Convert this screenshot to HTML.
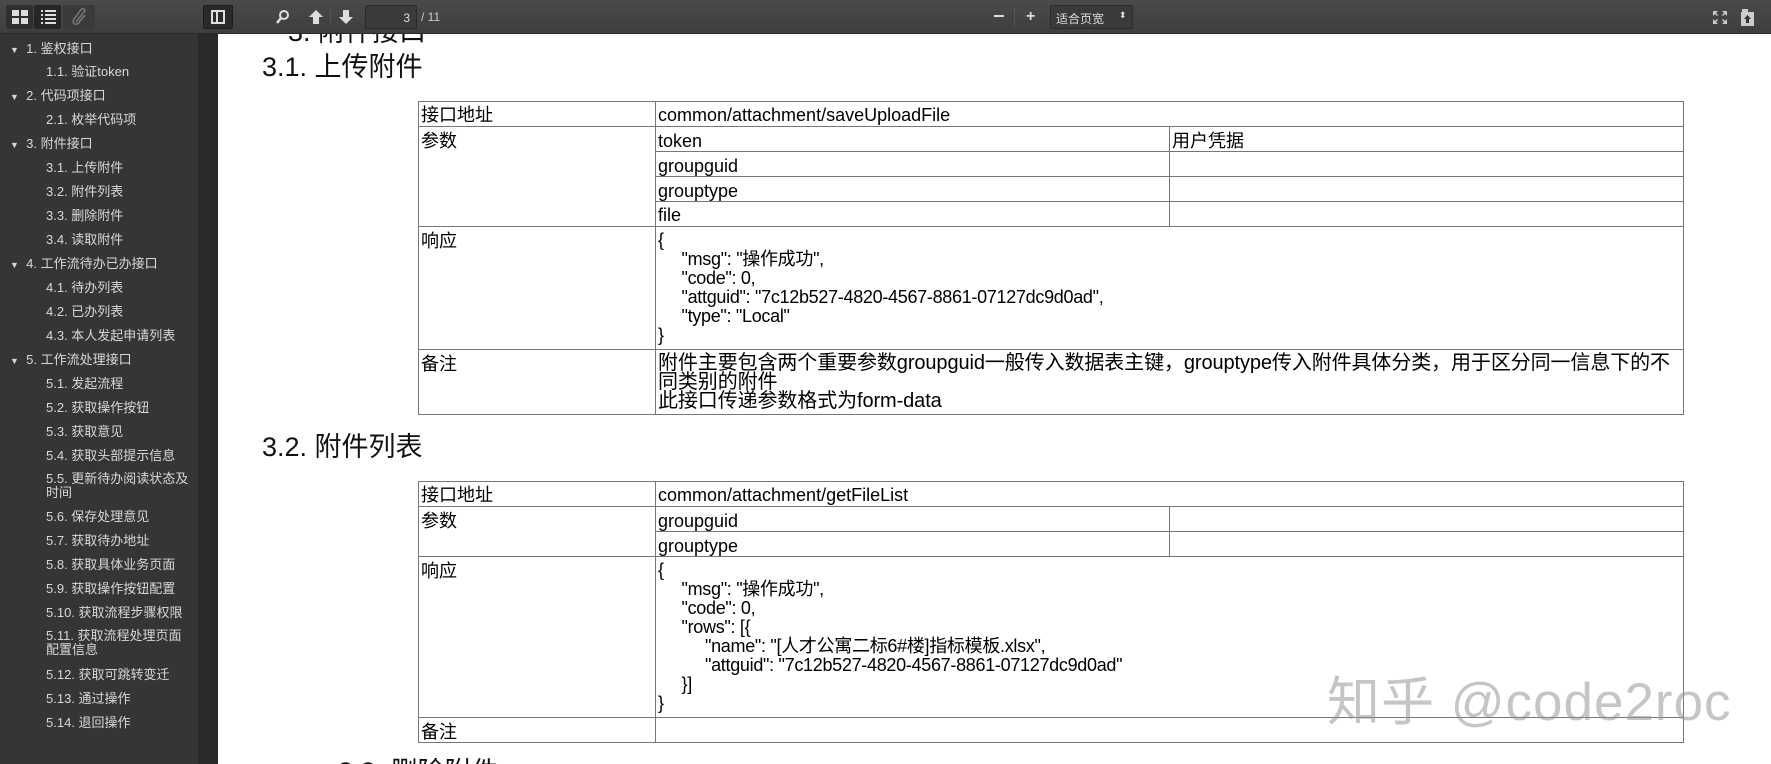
<!DOCTYPE html>
<html style="width:1771px;height:764px;overflow:hidden"><head><meta charset="utf-8"><style>
*{margin:0;padding:0;box-sizing:border-box}
body{width:1771px;height:764px;overflow:hidden;background:#fff;font-family:"Liberation Sans","Noto Sans CJK SC",sans-serif;position:relative}
.a{position:absolute;white-space:nowrap}
#tb{left:0;top:0;width:1771px;height:34px;background:linear-gradient(#4a4a4a,#3e3e3e);border-bottom:1px solid #2a2a2a;z-index:5}
#tbx{position:absolute;left:0;top:0;width:1771px;height:34px;z-index:6}
#tbx>*{position:absolute}
#sb{left:0;top:34px;width:198px;height:730px;background:#353535}
#band{left:198px;top:34px;width:20px;height:730px;background:#2a2a2a}
.s{position:absolute;color:#d8d8d8;font-size:13px;line-height:14px;white-space:nowrap}
.btn{border-radius:2px}
.t{font-size:18px;color:#000;line-height:20px}
.ln{position:absolute;background:#777}
.h{font-size:27px;color:#111}
.code{font-size:18px;line-height:19px;position:absolute;white-space:pre;letter-spacing:-0.3px}
</style></head><body>
<div class="a" style="left:288px;top:10px;font-size:27px;color:#111">3. 附件接口</div>
<div id="tb" class="a"></div>
<div id="tbx">
<div class="btn" style="left:6px;top:5px;width:27px;height:24px;background:#2f2f2f"></div>
<svg style="left:12px;top:10px" width="16" height="14"><rect x="0" y="0" width="7" height="6" fill="#ddd"/><rect x="9" y="0" width="7" height="6" fill="#ddd"/><rect x="0" y="8" width="7" height="6" fill="#ddd"/><rect x="9" y="8" width="7" height="6" fill="#ddd"/></svg>
<div class="btn" style="left:34px;top:5px;width:27px;height:24px;background:#262626"></div>
<svg style="left:41px;top:10px" width="15" height="14"><g fill="#ddd"><rect x="0" y="0" width="2" height="2"/><rect x="4" y="0" width="11" height="2"/><rect x="0" y="4" width="2" height="2"/><rect x="4" y="4" width="11" height="2"/><rect x="0" y="8" width="2" height="2"/><rect x="4" y="8" width="11" height="2"/><rect x="0" y="12" width="2" height="2"/><rect x="4" y="12" width="11" height="2"/></g></svg>
<div class="btn" style="left:63px;top:5px;width:32px;height:24px;background:#3a3a3a"></div>
<svg style="left:72px;top:8px" width="16" height="18"><path d="M4 14 L12 4 Q14 2 12 1 Q10 0 8 3 L2 11 Q0 15 3 16 Q6 17 8 13 L13 7" stroke="#777" stroke-width="1.5" fill="none"/></svg>
<div class="btn" style="left:203px;top:5px;width:30px;height:24px;background:#2a2a2a;border:1px solid #1e1e1e"></div>
<svg style="left:211px;top:10px" width="14" height="14"><rect x="1" y="1" width="12" height="12" fill="none" stroke="#ddd" stroke-width="2"/><rect x="5" y="1" width="2" height="12" fill="#ddd"/></svg>
<svg style="left:276px;top:9px" width="14" height="16"><circle cx="8" cy="6" r="4" stroke="#ddd" stroke-width="2" fill="none"/><path d="M5 9 L1 14" stroke="#ddd" stroke-width="2.5"/></svg>
<svg style="left:308px;top:9px" width="16" height="16"><path d="M8 1 L15 8 L11 8 L11 15 L5 15 L5 8 L1 8Z" fill="#ddd"/></svg>
<div style="left:330px;top:8px;width:1px;height:18px;background:#555"></div>
<svg style="left:338px;top:9px" width="16" height="16"><path d="M8 15 L15 8 L11 8 L11 1 L5 1 L5 8 L1 8Z" fill="#ddd"/></svg>
<div style="left:365px;top:5px;width:52px;height:24px;background:#3a3a3a;border:1px solid #2a2a2a;border-radius:2px;color:#ddd;font-size:12px;text-align:right;padding:5px 6px 0 0">3</div>
<div style="left:421px;top:10px;color:#ccc;font-size:12px">/ 11</div>
<div style="left:994px;top:15px;width:10px;height:2px;background:#ddd"></div>
<div style="left:1014px;top:8px;width:1px;height:18px;background:#555"></div>
<div style="left:1026px;top:10px;color:#ddd;font-size:16px;font-weight:bold;line-height:14px">+</div>
<div style="left:1050px;top:5px;width:83px;height:24px;background:#3a3a3a;border:1px solid #2c2c2c;border-radius:2px;color:#ddd;font-size:12px;padding:4px 0 0 5px">适合页宽<span style="position:absolute;left:68px;top:4px;font-size:9px">⬍</span></div>
<svg style="left:1713px;top:11px" width="14" height="13"><g fill="#ccc"><path d="M0 0h5l-2 2 2 2-1 1-2-2-2 2z"/><path d="M14 0h-5l2 2-2 2 1 1 2-2 2 2z"/><path d="M0 13h5l-2-2 2-2-1-1-2 2-2-2z"/><path d="M14 13h-5l2-2-2-2 1-1 2 2 2-2z"/></g></svg>
<svg style="left:1741px;top:9px" width="13" height="17"><rect x="0" y="3" width="13" height="14" fill="#ccc"/><rect x="1" y="0" width="6" height="3" fill="#ccc"/><path d="M6.5 6 L10 10 L8 10 L8 14 L5 14 L5 10 L3 10Z" fill="#333"/></svg>
</div>

<div id="sb" class="a"></div>
<div id="band" class="a"></div>
<div class="s" style="left:10px;top:42px"><span style="font-size:9px">▼</span>&nbsp; 1. 鉴权接口</div>
<div class="s" style="left:46px;top:65px">1.1. 验证token</div>
<div class="s" style="left:10px;top:89px"><span style="font-size:9px">▼</span>&nbsp; 2. 代码项接口</div>
<div class="s" style="left:46px;top:113px">2.1. 枚举代码项</div>
<div class="s" style="left:10px;top:137px"><span style="font-size:9px">▼</span>&nbsp; 3. 附件接口</div>
<div class="s" style="left:46px;top:161px">3.1. 上传附件</div>
<div class="s" style="left:46px;top:185px">3.2. 附件列表</div>
<div class="s" style="left:46px;top:209px">3.3. 删除附件</div>
<div class="s" style="left:46px;top:233px">3.4. 读取附件</div>
<div class="s" style="left:10px;top:257px"><span style="font-size:9px">▼</span>&nbsp; 4. 工作流待办已办接口</div>
<div class="s" style="left:46px;top:281px">4.1. 待办列表</div>
<div class="s" style="left:46px;top:305px">4.2. 已办列表</div>
<div class="s" style="left:46px;top:329px">4.3. 本人发起申请列表</div>
<div class="s" style="left:10px;top:353px"><span style="font-size:9px">▼</span>&nbsp; 5. 工作流处理接口</div>
<div class="s" style="left:46px;top:377px">5.1. 发起流程</div>
<div class="s" style="left:46px;top:401px">5.2. 获取操作按钮</div>
<div class="s" style="left:46px;top:425px">5.3. 获取意见</div>
<div class="s" style="left:46px;top:449px">5.4. 获取头部提示信息</div>
<div class="s" style="left:46px;top:472px">5.5. 更新待办阅读状态及<br>时间</div>
<div class="s" style="left:46px;top:510px">5.6. 保存处理意见</div>
<div class="s" style="left:46px;top:534px">5.7. 获取待办地址</div>
<div class="s" style="left:46px;top:558px">5.8. 获取具体业务页面</div>
<div class="s" style="left:46px;top:582px">5.9. 获取操作按钮配置</div>
<div class="s" style="left:46px;top:606px">5.10. 获取流程步骤权限</div>
<div class="s" style="left:46px;top:629px">5.11. 获取流程处理页面<br>配置信息</div>
<div class="s" style="left:46px;top:668px">5.12. 获取可跳转变迁</div>
<div class="s" style="left:46px;top:692px">5.13. 通过操作</div>
<div class="s" style="left:46px;top:716px">5.14. 退回操作</div>

<div class="a h" style="left:262px;top:45px">3.1. 上传附件</div>

<div class="a" style="left:418px;top:101px;width:1266px;height:314px;border:1px solid #777"></div>
<div class="ln" style="left:655px;top:101px;width:1px;height:314px"></div>
<div class="ln" style="left:418px;top:126px;width:1266px;height:1px"></div>
<div class="ln" style="left:655px;top:151px;width:1029px;height:1px"></div>
<div class="ln" style="left:655px;top:176px;width:1029px;height:1px"></div>
<div class="ln" style="left:655px;top:201px;width:1029px;height:1px"></div>
<div class="ln" style="left:1169px;top:126px;width:1px;height:100px"></div>
<div class="ln" style="left:418px;top:226px;width:1266px;height:1px"></div>
<div class="ln" style="left:418px;top:349px;width:1266px;height:1px"></div>
<div class="a t" style="left:421px;top:105px">接口地址</div>
<div class="a t" style="left:658px;top:105px">common/attachment/saveUploadFile</div>
<div class="a t" style="left:421px;top:131px">参数</div>
<div class="a t" style="left:658px;top:131px">token</div>
<div class="a t" style="left:1172px;top:131px">用户凭据</div>
<div class="a t" style="left:658px;top:156px">groupguid</div>
<div class="a t" style="left:658px;top:181px">grouptype</div>
<div class="a t" style="left:658px;top:205px">file</div>
<div class="a t" style="left:421px;top:231px">响应</div>
<div class="code" style="left:658px;top:231px">{
     "msg": "操作成功",
     "code": 0,
     "attguid": "7c12b527-4820-4567-8861-07127dc9d0ad",
     "type": "Local"
}</div>
<div class="a t" style="left:421px;top:354px">备注</div>
<div class="code" style="left:658px;top:354px;font-size:20px;letter-spacing:-0.1px;line-height:19px">附件主要包含两个重要参数groupguid一般传入数据表主键，grouptype传入附件具体分类，用于区分同一信息下的不
同类别的附件
此接口传递参数格式为form-data</div>

<div class="a h" style="left:262px;top:425px">3.2. 附件列表</div>

<div class="a" style="left:418px;top:481px;width:1266px;height:262px;border:1px solid #777"></div>
<div class="ln" style="left:655px;top:481px;width:1px;height:262px"></div>
<div class="ln" style="left:418px;top:506px;width:1266px;height:1px"></div>
<div class="ln" style="left:655px;top:531px;width:1029px;height:1px"></div>
<div class="ln" style="left:1169px;top:506px;width:1px;height:50px"></div>
<div class="ln" style="left:418px;top:556px;width:1266px;height:1px"></div>
<div class="ln" style="left:418px;top:717px;width:1266px;height:1px"></div>
<div class="a t" style="left:421px;top:485px">接口地址</div>
<div class="a t" style="left:658px;top:485px">common/attachment/getFileList</div>
<div class="a t" style="left:421px;top:511px">参数</div>
<div class="a t" style="left:658px;top:511px">groupguid</div>
<div class="a t" style="left:658px;top:536px">grouptype</div>
<div class="a t" style="left:421px;top:561px">响应</div>
<div class="code" style="left:658px;top:561px">{
     "msg": "操作成功",
     "code": 0,
     "rows": [{
          "name": "[人才公寓二标6#楼]指标模板.xlsx",
          "attguid": "7c12b527-4820-4567-8861-07127dc9d0ad"
     }]
}</div>
<div class="a t" style="left:421px;top:722px">备注</div>

<div class="a" style="left:338px;top:750px;font-size:27px;color:#111">3.3. 删除附件</div>

<div class="a" style="left:1327px;top:660px;font-size:53px;color:rgba(150,150,150,0.55);letter-spacing:1px">知乎 @code2roc</div>
</body></html>
